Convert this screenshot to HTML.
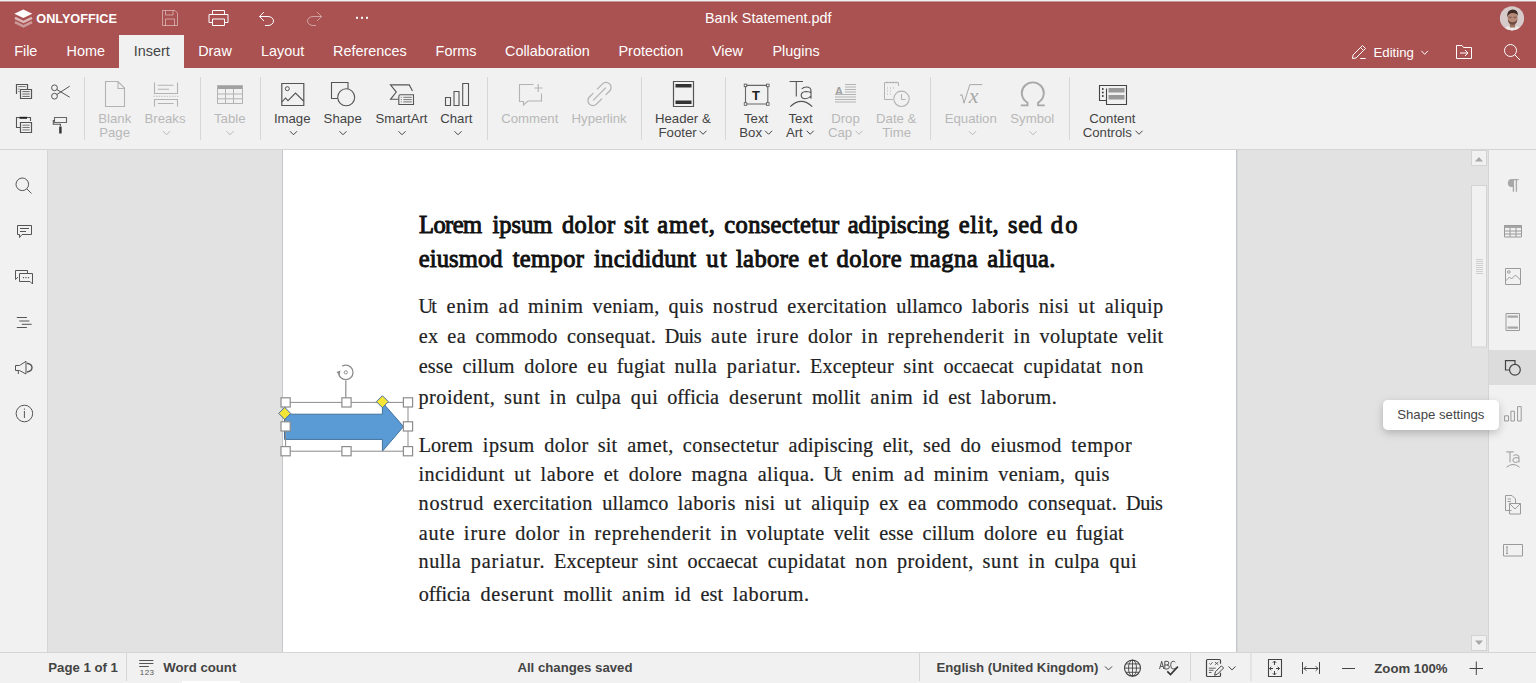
<!DOCTYPE html>
<html><head><meta charset="utf-8"><title>ONLYOFFICE</title>
<style>html,body{margin:0;padding:0;width:1536px;height:683px;overflow:hidden;background:#f1f1f1}svg{display:block}</style>
</head><body>
<svg width="1536" height="683" viewBox="0 0 1536 683">
<rect x="0" y="0" width="1536" height="683" fill="#f1f1f1" />
<rect x="0" y="0" width="1536" height="1" fill="#eef1f4" />
<rect x="0" y="1" width="1536" height="1" fill="#c99a9a" />
<rect x="0" y="2" width="1536" height="1" fill="#a64c4c" />
<rect x="0" y="3" width="1536" height="65" fill="#aa5252" />
<rect x="119" y="35" width="65" height="33" fill="#f1f1f1" />
<rect x="0" y="149" width="1536" height="1" fill="#d5d5d5" />
<rect x="47" y="150" width="1" height="502" fill="#d5d5d5" />
<rect x="48" y="150" width="1440" height="502" fill="#e2e2e2" />
<rect x="282" y="150" width="1" height="502" fill="#c3c7cc" />
<rect x="283" y="150" width="953" height="502" fill="#ffffff" />
<rect x="1236" y="150" width="1" height="502" fill="#c3c7cc" />
<rect x="1237" y="150" width="1" height="502" fill="#d6d7d9" />
<rect x="1488" y="150" width="1" height="502" fill="#d5d5d5" />
<rect x="1489" y="150" width="47" height="502" fill="#f1f1f1" />
<rect x="1489" y="350" width="47" height="35" fill="#dcdcdc" />
<rect x="0" y="652" width="1536" height="1" fill="#d5d5d5" />
<rect x="0" y="653" width="1536" height="30" fill="#f1f1f1" />
<g fill="#fff">
<path d="M14.3,13.8 L23.3,9.5 L32.3,13.8 L23.3,18.1 Z" stroke="none" stroke-width="1" fill="#ffffff" />
<path d="M15,17.8 L23.5,22 L32,17.8" stroke="rgba(255,255,255,0.6)" stroke-width="2.4" fill="none" />
<path d="M15,22.2 L23.5,26.4 L32,22.2" stroke="rgba(255,255,255,0.42)" stroke-width="2.4" fill="none" />
</g>
<text x="36.3" y="23" font-family="Liberation Sans" font-size="13.2" font-weight="bold" fill="#ffffff" textLength="80.6" lengthAdjust="spacingAndGlyphs">ONLYOFFICE</text>
<path d="M162.5,10.5 H175 L177.5,13 V25.5 H162.5 Z M165.5,10.5 V15 H173 V10.5 M165.5,25.5 V19 H174.5 V25.5" stroke="rgba(255,255,255,0.45)" stroke-width="1" fill="none" />
<path d="M212.5,14.5 V10.5 H224.5 V14.5 M212.5,22.5 H209 V14.5 H228 V22.5 H224.5 M212.5,19 H224.5 V25.5 H212.5 Z" stroke="#ffffff" stroke-width="1" fill="none" />
<path d="M264,12 L259.5,16.5 L264,21 M259.5,16.5 H268 A5.5,4.5 0 0 1 268,25.5 H265" stroke="#ffffff" stroke-width="1" fill="none" />
<path d="M317,12 L321.5,16.5 L317,21 M321.5,16.5 H313 A5.5,4.5 0 0 0 313,25.5 H316" stroke="rgba(255,255,255,0.45)" stroke-width="1" fill="none" />
<rect x="356" y="16.8" width="2" height="2" fill="#fff"/>
<rect x="361" y="16.8" width="2" height="2" fill="#fff"/>
<rect x="366" y="16.8" width="2" height="2" fill="#fff"/>
<text x="705" y="22.9" font-family="Liberation Sans" font-size="14.4" font-weight="normal" fill="#ffffff" >Bank Statement.pdf</text>
<clipPath id="av"><circle cx="1512" cy="18.3" r="12.1"/></clipPath>
<g clip-path="url(#av)">
<rect x="1499" y="5" width="26" height="27" fill="#d6caca"/>
<ellipse cx="1512.5" cy="31" rx="9" ry="5.5" fill="#eee8e6"/>
<rect x="1509.8" y="21" width="5.4" height="6.5" fill="#9c7263"/>
<ellipse cx="1512.6" cy="18.2" rx="4.9" ry="6.3" fill="#b58878"/>
<path d="M1507.8,19 Q1508.2,24.8 1512.6,24.8 Q1517,24.8 1517.4,19 Q1516.5,22 1512.6,22.2 Q1508.7,22 1507.8,19Z" fill="#6e4a3e"/>
<path d="M1507.2,17.5 Q1506.5,10 1512.5,9.6 Q1518.5,9.5 1518,16.5 Q1517.3,13 1512.8,13 Q1508.5,12.8 1507.2,17.5Z" fill="#3e2a22"/>
<path d="M1508.5,17.3 H1511.6 M1513.6,17.3 H1516.7" stroke="#5a4038" stroke-width="0.7"/>
</g>
<text x="14.2" y="56" font-family="Liberation Sans" font-size="14.4" font-weight="normal" fill="#ffffff" >File</text>
<text x="66.6" y="56" font-family="Liberation Sans" font-size="14.4" font-weight="normal" fill="#ffffff" >Home</text>
<text x="133.7" y="56" font-family="Liberation Sans" font-size="14.4" font-weight="normal" fill="#444444" >Insert</text>
<text x="198.2" y="56" font-family="Liberation Sans" font-size="14.4" font-weight="normal" fill="#ffffff" >Draw</text>
<text x="261.1" y="56" font-family="Liberation Sans" font-size="14.4" font-weight="normal" fill="#ffffff" >Layout</text>
<text x="333.1" y="56" font-family="Liberation Sans" font-size="14.4" font-weight="normal" fill="#ffffff" >References</text>
<text x="435.6" y="56" font-family="Liberation Sans" font-size="14.4" font-weight="normal" fill="#ffffff" >Forms</text>
<text x="505.0" y="56" font-family="Liberation Sans" font-size="14.4" font-weight="normal" fill="#ffffff" >Collaboration</text>
<text x="618.5" y="56" font-family="Liberation Sans" font-size="14.4" font-weight="normal" fill="#ffffff" >Protection</text>
<text x="711.9" y="56" font-family="Liberation Sans" font-size="14.4" font-weight="normal" fill="#ffffff" >View</text>
<text x="772.4" y="56" font-family="Liberation Sans" font-size="14.4" font-weight="normal" fill="#ffffff" >Plugins</text>
<path d="M1352.5,58.5 L1353,55 L1362.5,45.5 L1365.5,48.5 L1356,58 Z M1360.5,47.5 L1363.5,50.5 M1360.2,58.5 H1365.6" stroke="#ffffff" stroke-width="1" fill="none" />
<text x="1373.5" y="57.4" font-family="Liberation Sans" font-size="13.2" font-weight="normal" fill="#ffffff" >Editing</text>
<path d="M1421.45,50.85 L1424.7,54.35 L1427.95,50.85" stroke="#ffffff" stroke-width="1" fill="none" />
<path d="M1456.5,58.5 V45.5 H1462 L1463.5,47.5 H1471.5 V58.5 Z M1460,53 H1468 M1465,50 L1468,53 L1465,56" stroke="#ffffff" stroke-width="1" fill="none" />
<circle cx="1510.5" cy="50.5" r="6" fill="none" stroke="#ffffff" stroke-width="1"/>
<path d="M1514.8,54.8 L1520,60" stroke="#ffffff" stroke-width="1" fill="none" />
<rect x="84.0" y="77" width="1" height="63" fill="#d7d7d7" />
<rect x="200.0" y="77" width="1" height="63" fill="#d7d7d7" />
<rect x="260.0" y="77" width="1" height="63" fill="#d7d7d7" />
<rect x="487.0" y="77" width="1" height="63" fill="#d7d7d7" />
<rect x="641.0" y="77" width="1" height="63" fill="#d7d7d7" />
<rect x="725.0" y="77" width="1" height="63" fill="#d7d7d7" />
<rect x="930.0" y="77" width="1" height="63" fill="#d7d7d7" />
<rect x="1069.0" y="77" width="1" height="63" fill="#d7d7d7" />
<path d="M16.5,94 V84.5 H27.5 V89" stroke="#555" stroke-width="1.2" fill="none" />
<path d="M18.2,86.6 H25.7 M18.2,89 H19.5 M18.2,91.5 H19.5" stroke="#777" stroke-width="1" fill="none" />
<path d="M20.5,89.5 H31.5 V98.5 H20.5 Z" stroke="#555" stroke-width="1.2" fill="none" />
<path d="M22.3,91.6 H29.7 M22.3,94 H29.7 M22.3,96.4 H29.7" stroke="#666" stroke-width="1" fill="none" />
<circle cx="54.5" cy="87.8" r="2.9" fill="none" stroke="#555" stroke-width="1"/>
<circle cx="54.5" cy="96.2" r="2.9" fill="none" stroke="#555" stroke-width="1"/>
<path d="M56.8,89.5 L69.7,97.2 M56.8,94.5 L69.7,86.2" stroke="#555" stroke-width="1" fill="none" />
<path d="M20,127.5 H16.5 V117.5 H30.5 V121" stroke="#555" stroke-width="1.1" fill="none" />
<path d="M19.5,117.8 H27" stroke="#222" stroke-width="2" fill="none" />
<path d="M20.5,122.5 H31.5 V132.5 H20.5 Z" stroke="#555" stroke-width="1.2" fill="none" />
<path d="M22.4,125.2 H29.7 M22.4,127.5 H29.7 M22.4,129.9 H29.7" stroke="#777" stroke-width="1" fill="none" />
<path d="M54.5,117.5 H66.5 V122.5 H54.5 Z" stroke="#666" stroke-width="1.1" fill="none" />
<path d="M54.5,120.5 H53.3 V124.3 H60.4 V126" stroke="#555" stroke-width="1.1" fill="none" />
<path d="M60.4,126.5 V133.5" stroke="#333" stroke-width="2.4" fill="none" />
<path d="M105.5,81.5 H118 L124.5,88 V106.5 H105.5 Z M118,81.5 V88.5 H124.5" stroke="#b3b3b3" stroke-width="1.1" fill="none" />
<path d="M153.5,96.3 H179" stroke="#c4c4c4" stroke-width="1" fill="none" stroke-dasharray="1.6 1"/>
<path d="M154.5,82.5 V93.5 H177.5 V82.5 M157.8,85.3 H173.5 M157.8,89.3 H169 M154.5,106.5 V99.5 H177.5 V106.5 M157.8,103.5 H173.5" stroke="#b3b3b3" stroke-width="1.1" fill="none" />
<rect x="217.5" y="85" width="25" height="4" fill="#a0a0a0" />
<path d="M217.5,85.5 H242.5 V103.5 H217.5 Z M217.5,94 H242.5 M217.5,98.8 H242.5 M225.5,89 V103.5 M233.5,89 V103.5" stroke="#b3b3b3" stroke-width="1" fill="none" />
<path d="M281.8,83.5 H303.8 V105.5 H281.8 Z" stroke="#555" stroke-width="1.2" fill="none" />
<circle cx="287.3" cy="88.7" r="2" fill="none" stroke="#555" stroke-width="1"/>
<path d="M282,101.8 L285.5,98 L288,100.6 L295.5,93 L303.5,101" stroke="#555" stroke-width="1.1" fill="none" />
<path d="M348,89 V82.5 H331.5 V98.5 H337.8" stroke="#555" stroke-width="1.1" fill="none" />
<circle cx="346.2" cy="97.3" r="8.5" fill="none" stroke="#555" stroke-width="1.1"/>
<path d="M398.6,99.3 H390.5 L396.3,92.1 L390.5,84.9 H409.3 L412.5,91" stroke="#555" stroke-width="1.1" fill="none" />
<path d="M398.8,104.5 V96.5 Q398.8,94.8 400.5,94.8 H413.5 V104.5 Z" stroke="#555" stroke-width="1.1" fill="none" />
<path d="M400.8,97.3 H401.8 M400.8,99.6 H401.8 M400.8,101.9 H401.8 M403.3,97.3 H411.8 M403.3,99.6 H411.8 M403.3,101.9 H411.8" stroke="#777" stroke-width="1" fill="none" />
<path d="M445.5,97.5 H450.5 V105.5 H445.5 Z M454,91.5 H459 V105.5 H454 Z M462.7,83.5 H468.5 V105.5 H462.7 Z" stroke="#555" stroke-width="1.1" fill="none" />
<path d="M533.5,84.5 H519.5 V101.5 H523.5 V105 L528,101 H541.5 V93.5 M538.2,84 V92 M534.5,88 H542.5" stroke="#b3b3b3" stroke-width="1.1" fill="none" />
<g transform="translate(599.5,94) rotate(-45)" fill="none" stroke="#b3b3b3" stroke-width="1.3"><path d="M1.5,-5 H9.3 A5,5 0 0 1 9.3,5 H3.8"/><path d="M-1.5,5 H-9.3 A5,5 0 0 1 -9.3,-5 H-3.8"/><path d="M-9,0 H9"/></g>
<path d="M673.5,81.5 H693.5 V106.5 H673.5 Z" stroke="#555" stroke-width="1.2" fill="none" />
<rect x="675.5" y="84" width="16" height="3.5" fill="#333" />
<rect x="675.5" y="100.5" width="16" height="3.5" fill="#333" />
<path d="M745.5,85.4 H767.8 V104 H745.5 Z" stroke="#666" stroke-width="1.1" fill="none" />
<rect x="744.2" y="84.10000000000001" width="2.6" height="2.6" fill="#f1f1f1" stroke="#555" stroke-width="0.8"/>
<rect x="766.5" y="84.10000000000001" width="2.6" height="2.6" fill="#f1f1f1" stroke="#555" stroke-width="0.8"/>
<rect x="744.2" y="102.7" width="2.6" height="2.6" fill="#f1f1f1" stroke="#555" stroke-width="0.8"/>
<rect x="766.5" y="102.7" width="2.6" height="2.6" fill="#f1f1f1" stroke="#555" stroke-width="0.8"/>
<text x="751.9" y="99.7" font-family="Liberation Sans" font-size="13" font-weight="bold" fill="#222" >T</text>
<path d="M789.6,81.5 H803 M796.3,81.5 V96.5" stroke="#555" stroke-width="1.1" fill="none" />
<path d="M801.8,88.8 Q803.5,87 806.5,87 Q811,87 811,91 V98.8 M811,92.8 Q810,91.5 806,91.5 Q801.2,91.8 801.2,95.3 Q801.2,98.8 805.5,98.8 Q809,98.6 811,96" stroke="#555" stroke-width="1.1" fill="none" />
<path d="M790.2,106.6 Q801.2,96 812.3,106.6" stroke="#555" stroke-width="1.1" fill="none" />
<text x="835" y="94.5" font-family="Liberation Sans" font-size="11" font-weight="bold" fill="#a0a0a0" >A</text>
<path d="M845,84.5 H856 M845,87 H856 M845,89.5 H856 M845,92 H856 M835,94.5 H856 M835,97 H856 M835,99.5 H856 M835,102 H856" stroke="#b3b3b3" stroke-width="1" fill="none" />
<path d="M898.5,86 V82.5 H884.5 V99.5 H893" stroke="#b3b3b3" stroke-width="1" fill="none" />
<path d="M887,81.5 V83.5 M890,81.5 V83.5 M893,81.5 V83.5 M896,81.5 V83.5" stroke="#b3b3b3" stroke-width="1" fill="none" />
<path d="M887,88 H888 M890,88 H891 M893,88 H894 M887,91 H888 M890,91 H891 M887,94 H888 M890,94 H891" stroke="#b3b3b3" stroke-width="1" fill="none" />
<circle cx="901.5" cy="98.8" r="7.7" fill="#f1f1f1" stroke="#b3b3b3" stroke-width="1.1"/>
<path d="M901.5,94 V99.5 H905.5" stroke="#b3b3b3" stroke-width="1" fill="none" />
<path d="M960,95.5 L962,94.5 L964,103.2 L969.8,84.6 H982.3" stroke="#a8a8a8" stroke-width="1" fill="none" />
<text x="968.8" y="102.5" font-family="Liberation Serif" font-size="22" font-weight="normal" fill="#a8a8a8" font-style="italic">x</text>
<path d="M1020.8,105.4 H1027.5 V102.8 Q1021.8,99 1021.8,93 A11,10.6 0 1 1 1043.8,93 Q1043.8,99 1038.1,102.8 V105.4 H1044.8" stroke="#a8a8a8" stroke-width="1.9" fill="none" />
<path d="M1099.5,85.5 H1126.5 V104.5 H1106.5 V100.5 H1099.5 Z M1106.5,88.5 V100.5" stroke="#444" stroke-width="1.1" fill="none" />
<rect x="1108.5" y="88" width="16" height="4.5" fill="#999" />
<rect x="1108.5" y="95" width="16" height="4.5" fill="#999" />
<circle cx="1102.8" cy="89" r="0.9" fill="#333"/>
<circle cx="1102.8" cy="92.5" r="0.9" fill="#333"/>
<circle cx="1102.8" cy="96" r="0.9" fill="#333"/>
<text x="98.3" y="122.8" font-family="Liberation Sans" font-size="13.2" font-weight="normal" fill="#b8b8b8" >Blank</text>
<text x="99.2" y="136.8" font-family="Liberation Sans" font-size="13.2" font-weight="normal" fill="#b8b8b8" >Page</text>
<text x="144.5" y="122.8" font-family="Liberation Sans" font-size="13.2" font-weight="normal" fill="#b8b8b8" >Breaks</text>
<path d="M163.0,131.25 L166.5,134.75 L170.0,131.25" stroke="#b8b8b8" stroke-width="1" fill="none" />
<text x="214.0" y="122.8" font-family="Liberation Sans" font-size="13.2" font-weight="normal" fill="#b8b8b8" >Table</text>
<path d="M226.5,131.25 L230,134.75 L233.5,131.25" stroke="#b8b8b8" stroke-width="1" fill="none" />
<text x="273.9" y="122.8" font-family="Liberation Sans" font-size="13.2" font-weight="normal" fill="#444444" >Image</text>
<path d="M290.0,131.25 L293.5,134.75 L297.0,131.25" stroke="#444444" stroke-width="1" fill="none" />
<text x="323.59999999999997" y="122.8" font-family="Liberation Sans" font-size="13.2" font-weight="normal" fill="#444444" >Shape</text>
<path d="M339.5,131.25 L343,134.75 L346.5,131.25" stroke="#444444" stroke-width="1" fill="none" />
<text x="375.5" y="122.8" font-family="Liberation Sans" font-size="13.2" font-weight="normal" fill="#444444" >SmartArt</text>
<path d="M398.5,131.25 L402,134.75 L405.5,131.25" stroke="#444444" stroke-width="1" fill="none" />
<text x="440.2" y="122.8" font-family="Liberation Sans" font-size="13.2" font-weight="normal" fill="#444444" >Chart</text>
<path d="M454.5,131.25 L458,134.75 L461.5,131.25" stroke="#444444" stroke-width="1" fill="none" />
<text x="501.2" y="122.8" font-family="Liberation Sans" font-size="13.2" font-weight="normal" fill="#b8b8b8" >Comment</text>
<text x="571.6" y="122.8" font-family="Liberation Sans" font-size="13.2" font-weight="normal" fill="#b8b8b8" >Hyperlink</text>
<text x="655.0" y="122.8" font-family="Liberation Sans" font-size="13.2" font-weight="normal" fill="#444444" >Header &amp;</text>
<text x="658.5" y="136.8" font-family="Liberation Sans" font-size="13.2" font-weight="normal" fill="#444444" >Footer</text>
<path d="M699.5,130.75 L703,134.25 L706.5,130.75" stroke="#444444" stroke-width="1" fill="none" />
<text x="744.0" y="122.8" font-family="Liberation Sans" font-size="13.2" font-weight="normal" fill="#444444" >Text</text>
<text x="739.3000000000001" y="136.8" font-family="Liberation Sans" font-size="13.2" font-weight="normal" fill="#444444" >Box</text>
<path d="M765.1,130.75 L768.6,134.25 L772.1,130.75" stroke="#444444" stroke-width="1" fill="none" />
<text x="788.5" y="122.8" font-family="Liberation Sans" font-size="13.2" font-weight="normal" fill="#444444" >Text</text>
<text x="785.9000000000001" y="136.8" font-family="Liberation Sans" font-size="13.2" font-weight="normal" fill="#444444" >Art</text>
<path d="M806.7,130.75 L810.2,134.25 L813.7,130.75" stroke="#444444" stroke-width="1" fill="none" />
<text x="831.2" y="122.8" font-family="Liberation Sans" font-size="13.2" font-weight="normal" fill="#b8b8b8" >Drop</text>
<text x="828.0" y="136.8" font-family="Liberation Sans" font-size="13.2" font-weight="normal" fill="#b8b8b8" >Cap</text>
<path d="M855.5,130.75 L859,134.25 L862.5,130.75" stroke="#b8b8b8" stroke-width="1" fill="none" />
<text x="876.1" y="122.8" font-family="Liberation Sans" font-size="13.2" font-weight="normal" fill="#b8b8b8" >Date &amp;</text>
<text x="882.3000000000001" y="136.8" font-family="Liberation Sans" font-size="13.2" font-weight="normal" fill="#b8b8b8" >Time</text>
<text x="944.7" y="122.8" font-family="Liberation Sans" font-size="13.2" font-weight="normal" fill="#b8b8b8" >Equation</text>
<path d="M969.0,131.25 L972.5,134.75 L976.0,131.25" stroke="#b8b8b8" stroke-width="1" fill="none" />
<text x="1010.3000000000001" y="122.8" font-family="Liberation Sans" font-size="13.2" font-weight="normal" fill="#b8b8b8" >Symbol</text>
<path d="M1029.5,131.25 L1033,134.75 L1036.5,131.25" stroke="#b8b8b8" stroke-width="1" fill="none" />
<text x="1089.2" y="122.8" font-family="Liberation Sans" font-size="13.2" font-weight="normal" fill="#444444" >Content</text>
<text x="1082.7" y="136.8" font-family="Liberation Sans" font-size="13.2" font-weight="normal" fill="#444444" >Controls</text>
<path d="M1135.5,130.75 L1139,134.25 L1142.5,130.75" stroke="#444444" stroke-width="1" fill="none" />
<circle cx="22.3" cy="184.3" r="6.3" fill="none" stroke="#555" stroke-width="1"/>
<path d="M26.8,188.8 L31.5,193.5" stroke="#555" stroke-width="1" fill="none" />
<path d="M17.5,225.5 H31.5 V234.5 H22 L19.5,237.5 V234.5 H17.5 Z M20,228.5 H29 M20,231.5 H26" stroke="#555" stroke-width="1" fill="none" />
<path d="M15.5,279.5 V270.5 H27.5 V273 M15.5,279.5 L18,277" stroke="#555" stroke-width="1" fill="none" />
<path d="M19.5,273.5 H32.5 V284 L30,281.5 H19.5 Z" stroke="#555" stroke-width="1" fill="none" />
<rect x="22.9" y="277" width="1.2" height="1.2" fill="#555"/>
<rect x="25.4" y="277" width="1.2" height="1.2" fill="#555"/>
<rect x="27.9" y="277" width="1.2" height="1.2" fill="#555"/>
<path d="M16.8,317.5 H26.9 M19.3,321 H29.4 M21.8,324.3 H31.7 M16.8,327.5 H26.9" stroke="#555" stroke-width="1" fill="none" />
<path d="M15.5,365.5 H19.5 L26,361.3 V374 L19.5,370.5 H15.5 Z M18.3,370.5 V374" stroke="#555" stroke-width="1" fill="none" />
<path d="M27,363.2 Q32,364 32,367.6 Q32,371.3 27,372" stroke="#555" stroke-width="1.4" fill="none" />
<circle cx="24.4" cy="413.5" r="8.3" fill="none" stroke="#555" stroke-width="1"/>
<path d="M24.4,411 V418 M24.4,408.5 V409.8" stroke="#555" stroke-width="1" fill="none" />
<path d="M1513.4,179.3 H1510.8 Q1507.9,179.3 1507.9,183.1 Q1507.9,186.9 1510.8,186.9 H1513.4 Z" stroke="none" stroke-width="1" fill="#a8a8a8" />
<path d="M1510.5,179.6 H1518.6 M1513.4,179.3 V191.8 M1516.4,179.3 V191.8" stroke="#a8a8a8" stroke-width="1.3" fill="none" />
<rect x="1504.5" y="225" width="17" height="3" fill="#a6a6a6" />
<path d="M1504.5,225.5 H1521.5 V237 H1504.5 Z M1504.5,231 H1521.5 M1504.5,234 H1521.5 M1510,228 V237 M1516,228 V237" stroke="#9a9a9a" stroke-width="1" fill="none" />
<path d="M1505.5,268.5 H1520.5 V284.5 H1505.5 Z M1505.5,281 L1509.5,277 L1511.5,279 L1515.5,275 L1520.5,280" stroke="#9a9a9a" stroke-width="1" fill="none" />
<circle cx="1508.8" cy="272" r="1.3" fill="none" stroke="#9a9a9a" stroke-width="1"/>
<path d="M1506,313.5 H1519.5 V330.5 H1506 Z" stroke="#9a9a9a" stroke-width="1" fill="none" />
<rect x="1507.5" y="315.5" width="10.5" height="2.2" fill="#a6a6a6" />
<rect x="1507.5" y="326.5" width="10.5" height="2.2" fill="#a6a6a6" />
<path d="M1515,364.3 V360.6 H1505.5 V370 H1509.3" stroke="#444" stroke-width="1.2" fill="none" />
<circle cx="1514.9" cy="369.8" r="5.4" fill="none" stroke="#444" stroke-width="1.2"/>
<path d="M1504.6,415.8 H1508.5 V421 H1504.6 Z M1510.9,411.2 H1514.4 V421 H1510.9 Z M1517.6,406.6 H1521.2 V421 H1517.6 Z" stroke="#9a9a9a" stroke-width="1" fill="none" />
<path d="M1506.2,451.9 H1513.8 M1510,451.9 V462.3" stroke="#9a9a9a" stroke-width="1" fill="none" />
<path d="M1513.3,455.8 Q1514.5,454.8 1516.3,454.8 Q1519,454.8 1519,457.3 V462.4 M1519,458.2 Q1518,457.6 1515.8,457.7 Q1512.8,457.9 1512.8,460.1 Q1512.8,462.4 1515.5,462.4 Q1517.6,462.3 1519,460.7" stroke="#9a9a9a" stroke-width="1" fill="none" />
<path d="M1506.5,467.2 Q1513,461.8 1519.5,467.2" stroke="#9a9a9a" stroke-width="1" fill="none" />
<path d="M1511.5,510.5 H1505.5 V495.5 H1512 L1515.5,499 V503" stroke="#9a9a9a" stroke-width="1" fill="none" />
<path d="M1507.5,499 H1511 M1507.5,501.5 H1511" stroke="#9a9a9a" stroke-width="1" fill="none" />
<path d="M1509.5,503.5 H1520.5 V514 H1509.5 Z M1509.5,503.5 L1515,509 L1520.5,503.5" stroke="#9a9a9a" stroke-width="1" fill="none" />
<path d="M1503.5,544.5 H1522.5 V556 H1503.5 Z M1507,547 V553.5 M1506,547 H1508 M1506,553.5 H1508" stroke="#9a9a9a" stroke-width="1" fill="none" />
<rect x="1471.5" y="150.5" width="15" height="15" fill="#f1f1f1" stroke="#d3d3d3" stroke-width="1"/>
<path d="M1475,161.5 L1479,157 L1483,161.5 Z" stroke="none" stroke-width="1" fill="#a8a8a8" />
<rect x="1471.5" y="185.5" width="15" height="161.5" fill="#f1f1f1" stroke="#d3d3d3" stroke-width="1"/>
<rect x="1476" y="259" width="7" height="1" fill="#cfcfcf" />
<rect x="1476" y="261" width="7" height="1" fill="#cfcfcf" />
<rect x="1476" y="263" width="7" height="1" fill="#cfcfcf" />
<rect x="1476" y="265" width="7" height="1" fill="#cfcfcf" />
<rect x="1476" y="267" width="7" height="1" fill="#cfcfcf" />
<rect x="1476" y="269" width="7" height="1" fill="#cfcfcf" />
<rect x="1476" y="271" width="7" height="1" fill="#cfcfcf" />
<rect x="1476" y="273" width="7" height="1" fill="#cfcfcf" />
<rect x="1471.5" y="635.5" width="15" height="15" fill="#f1f1f1" stroke="#d3d3d3" stroke-width="1"/>
<path d="M1475,640.5 L1479,645 L1483,640.5 Z" stroke="none" stroke-width="1" fill="#a8a8a8" />
<defs><filter id="sh" x="-20%" y="-40%" width="140%" height="200%"><feDropShadow dx="0" dy="3" stdDeviation="4" flood-color="#000" flood-opacity="0.22"/></filter></defs>
<rect x="1383" y="400" width="116" height="30" rx="5" fill="#ffffff" filter="url(#sh)"/>
<text x="1397.2" y="418.6" font-family="Liberation Sans" font-size="13.2" font-weight="normal" fill="#444444" >Shape settings</text>
<text x="48.3" y="672.3" font-family="Liberation Sans" font-size="13.2" font-weight="bold" fill="#444444" >Page 1 of 1</text>
<rect x="126" y="653" width="1" height="28" fill="#d5d5d5" />
<path d="M139.2,660.5 H153.4 M139.2,663.5 H153.4 M139.2,666.5 H148.8" stroke="#555" stroke-width="1" fill="none" />
<text x="139.8" y="674.8" font-family="Liberation Sans" font-size="8" font-weight="normal" fill="#555" textLength="14.2" lengthAdjust="spacing">123</text>
<text x="163.3" y="672.3" font-family="Liberation Sans" font-size="13.2" font-weight="bold" fill="#444444" >Word count</text>
<text x="517.4" y="672.3" font-family="Liberation Sans" font-size="13.2" font-weight="bold" fill="#444444" >All changes saved</text>
<rect x="919" y="653" width="1" height="28" fill="#d5d5d5" />
<text x="936.5" y="671.9" font-family="Liberation Sans" font-size="13.2" font-weight="bold" fill="#444444" >English (United Kingdom)</text>
<path d="M1105.0,666.45 L1108.5,669.95 L1112.0,666.45" stroke="#444444" stroke-width="1" fill="none" />
<circle cx="1132.5" cy="668.1" r="8" fill="none" stroke="#444" stroke-width="1.1"/>
<ellipse cx="1132.5" cy="668.1" rx="4" ry="8" fill="none" stroke="#444" stroke-width="0.9"/>
<path d="M1124.5,668.1 H1140.5 M1126,663.9 H1139 M1126,672.3 H1139 M1132.5,660.1 V676.1" stroke="#444" stroke-width="0.9" fill="none" />
<path d="M1159.5,669 L1161.7,661.3 L1163.9,669 M1160.3,666.4 H1163.1 M1164.8,669 V661.3 H1167 Q1168.8,661.3 1168.8,663.1 Q1168.8,665 1167,665 H1164.8 M1167,665 Q1169.3,665 1169.3,667 Q1169.3,669 1167,669 H1164.8 M1175.3,662.4 Q1174.6,661.2 1173.1,661.2 Q1170.7,661.2 1170.7,665.1 Q1170.7,669 1173.1,669 Q1174.6,669 1175.3,667.8" stroke="#444" stroke-width="0.9" fill="none" />
<path d="M1167.3,671.4 L1170.5,674.6 L1177.9,666.6" stroke="#333" stroke-width="1.6" fill="none" />
<rect x="1190" y="653" width="1" height="28" fill="#d5d5d5" />
<path d="M1220.5,663.8 V660.5 Q1220.5,659.5 1219.5,659.5 H1207.5 Q1206.5,659.5 1206.5,660.5 V675.5 Q1206.5,676.5 1207.5,676.5 H1219.5 Q1220.5,676.5 1220.5,675.5 V672.8" stroke="#444" stroke-width="1.2" fill="none" />
<path d="M1209.4,663.4 L1210.6,664.5 L1212.6,662.2 M1214.9,662 L1218.3,664.8 M1218.3,662 L1214.9,664.8 M1208.9,668.2 H1215.7 M1208.9,670.3 H1213.5 M1208.9,672.5 H1211.5" stroke="#555" stroke-width="0.9" fill="none" />
<path d="M1214.6,675.3 L1215.4,671.8 L1221.4,665.8 L1223.6,668 L1217.6,674 Z" stroke="#444" stroke-width="1" fill="none" />
<path d="M1228.5,666.45 L1232,669.95 L1235.5,666.45" stroke="#444444" stroke-width="1" fill="none" />
<rect x="1250.5" y="653" width="1" height="28" fill="#d5d5d5" />
<path d="M1268.5,659.5 H1281.5 V676.5 H1268.5 Z" stroke="#444" stroke-width="1.1" fill="none" />
<path d="M1274.5,661 V665 M1272.8,662.8 L1274.5,661 L1276.2,662.8 M1274.5,675 V671 M1272.8,673.2 L1274.5,675 L1276.2,673.2 M1269.5,668.5 H1273 M1279.5,668.5 H1276 M1271.3,666.8 L1269.5,668.5 L1271.3,670.2 M1277.7,666.8 L1279.5,668.5 L1277.7,670.2" stroke="#444" stroke-width="1" fill="none" />
<path d="M1302.5,662 V674 M1319.5,662 V674 M1304,668.5 H1318 M1306.3,666.2 L1304,668.5 L1306.3,670.8 M1315.7,666.2 L1318,668.5 L1315.7,670.8" stroke="#444" stroke-width="1" fill="none" />
<path d="M1342,668.5 H1355" stroke="#444" stroke-width="1" fill="none" />
<text x="1374.3" y="672.6" font-family="Liberation Sans" font-size="13.2" font-weight="bold" fill="#444444" >Zoom 100%</text>
<path d="M1469.5,668.5 H1483 M1476.3,661.5 V675" stroke="#444" stroke-width="1" fill="none" />
<rect x="182" y="681" width="58" height="2" fill="#ffffff" />
<text x="418.99" y="232.9" font-family="Liberation Serif" font-size="24.5" font-weight="normal" fill="#111111" stroke="#111111" stroke-width="0.95" textLength="63.09" lengthAdjust="spacing">Lorem</text>
<text x="492.39" y="232.9" font-family="Liberation Serif" font-size="24.5" font-weight="normal" fill="#111111" stroke="#111111" stroke-width="0.95" textLength="60.00" lengthAdjust="spacing">ipsum</text>
<text x="561.91" y="232.9" font-family="Liberation Serif" font-size="24.5" font-weight="normal" fill="#111111" stroke="#111111" stroke-width="0.95" textLength="53.20" lengthAdjust="spacing">dolor</text>
<text x="624.00" y="232.9" font-family="Liberation Serif" font-size="24.5" font-weight="normal" fill="#111111" stroke="#111111" stroke-width="0.95" textLength="24.35" lengthAdjust="spacing">sit</text>
<text x="657.24" y="232.9" font-family="Liberation Serif" font-size="24.5" font-weight="normal" fill="#111111" stroke="#111111" stroke-width="0.95" textLength="57.60" lengthAdjust="spacing">amet,</text>
<text x="724.37" y="232.9" font-family="Liberation Serif" font-size="24.5" font-weight="normal" fill="#111111" stroke="#111111" stroke-width="0.95" textLength="114.75" lengthAdjust="spacing">consectetur</text>
<text x="847.64" y="232.9" font-family="Liberation Serif" font-size="24.5" font-weight="normal" fill="#111111" stroke="#111111" stroke-width="0.95" textLength="101.58" lengthAdjust="spacing">adipiscing</text>
<text x="958.74" y="232.9" font-family="Liberation Serif" font-size="24.5" font-weight="normal" fill="#111111" stroke="#111111" stroke-width="0.95" textLength="40.00" lengthAdjust="spacing">elit,</text>
<text x="1007.90" y="232.9" font-family="Liberation Serif" font-size="24.5" font-weight="normal" fill="#111111" stroke="#111111" stroke-width="0.95" textLength="34.10" lengthAdjust="spacing">sed</text>
<text x="1050.71" y="232.9" font-family="Liberation Serif" font-size="24.5" font-weight="normal" fill="#111111" stroke="#111111" stroke-width="0.95" textLength="26.82" lengthAdjust="spacing">do</text>
<text x="418.74" y="267" font-family="Liberation Serif" font-size="24.5" font-weight="normal" fill="#111111" stroke="#111111" stroke-width="0.95" textLength="83.86" lengthAdjust="spacing">eiusmod</text>
<text x="512.66" y="267" font-family="Liberation Serif" font-size="24.5" font-weight="normal" fill="#111111" stroke="#111111" stroke-width="0.95" textLength="71.30" lengthAdjust="spacing">tempor</text>
<text x="593.99" y="267" font-family="Liberation Serif" font-size="24.5" font-weight="normal" fill="#111111" stroke="#111111" stroke-width="0.95" textLength="102.16" lengthAdjust="spacing">incididunt</text>
<text x="706.18" y="267" font-family="Liberation Serif" font-size="24.5" font-weight="normal" fill="#111111" stroke="#111111" stroke-width="0.95" textLength="20.67" lengthAdjust="spacing">ut</text>
<text x="735.91" y="267" font-family="Liberation Serif" font-size="24.5" font-weight="normal" fill="#111111" stroke="#111111" stroke-width="0.95" textLength="63.24" lengthAdjust="spacing">labore</text>
<text x="808.34" y="267" font-family="Liberation Serif" font-size="24.5" font-weight="normal" fill="#111111" stroke="#111111" stroke-width="0.95" textLength="19.30" lengthAdjust="spacing">et</text>
<text x="836.51" y="267" font-family="Liberation Serif" font-size="24.5" font-weight="normal" fill="#111111" stroke="#111111" stroke-width="0.95" textLength="65.13" lengthAdjust="spacing">dolore</text>
<text x="910.29" y="267" font-family="Liberation Serif" font-size="24.5" font-weight="normal" fill="#111111" stroke="#111111" stroke-width="0.95" textLength="67.25" lengthAdjust="spacing">magna</text>
<text x="987.14" y="267" font-family="Liberation Serif" font-size="24.5" font-weight="normal" fill="#111111" stroke="#111111" stroke-width="0.95" textLength="68.28" lengthAdjust="spacing">aliqua.</text>
<text x="418.39" y="313.2" font-family="Liberation Serif" font-size="20.2" font-weight="normal" fill="#222222" stroke="#222222" stroke-width="0.2" textLength="18.43" lengthAdjust="spacing">Ut</text>
<text x="446.62" y="313.2" font-family="Liberation Serif" font-size="20.2" font-weight="normal" fill="#222222" stroke="#222222" stroke-width="0.2" textLength="42.09" lengthAdjust="spacing">enim</text>
<text x="498.39" y="313.2" font-family="Liberation Serif" font-size="20.2" font-weight="normal" fill="#222222" stroke="#222222" stroke-width="0.2" textLength="20.20" lengthAdjust="spacing">ad</text>
<text x="528.07" y="313.2" font-family="Liberation Serif" font-size="20.2" font-weight="normal" fill="#222222" stroke="#222222" stroke-width="0.2" textLength="54.85" lengthAdjust="spacing">minim</text>
<text x="592.52" y="313.2" font-family="Liberation Serif" font-size="20.2" font-weight="normal" fill="#222222" stroke="#222222" stroke-width="0.2" textLength="66.80" lengthAdjust="spacing">veniam,</text>
<text x="668.61" y="313.2" font-family="Liberation Serif" font-size="20.2" font-weight="normal" fill="#222222" stroke="#222222" stroke-width="0.2" textLength="34.79" lengthAdjust="spacing">quis</text>
<text x="712.81" y="313.2" font-family="Liberation Serif" font-size="20.2" font-weight="normal" fill="#222222" stroke="#222222" stroke-width="0.2" textLength="64.89" lengthAdjust="spacing">nostrud</text>
<text x="787.28" y="313.2" font-family="Liberation Serif" font-size="20.2" font-weight="normal" fill="#222222" stroke="#222222" stroke-width="0.2" textLength="99.24" lengthAdjust="spacing">exercitation</text>
<text x="896.20" y="313.2" font-family="Liberation Serif" font-size="20.2" font-weight="normal" fill="#222222" stroke="#222222" stroke-width="0.2" textLength="66.17" lengthAdjust="spacing">ullamco</text>
<text x="971.73" y="313.2" font-family="Liberation Serif" font-size="20.2" font-weight="normal" fill="#222222" stroke="#222222" stroke-width="0.2" textLength="57.50" lengthAdjust="spacing">laboris</text>
<text x="1038.64" y="313.2" font-family="Liberation Serif" font-size="20.2" font-weight="normal" fill="#222222" stroke="#222222" stroke-width="0.2" textLength="30.26" lengthAdjust="spacing">nisi</text>
<text x="1078.23" y="313.2" font-family="Liberation Serif" font-size="20.2" font-weight="normal" fill="#222222" stroke="#222222" stroke-width="0.2" textLength="16.71" lengthAdjust="spacing">ut</text>
<text x="1104.74" y="313.2" font-family="Liberation Serif" font-size="20.2" font-weight="normal" fill="#222222" stroke="#222222" stroke-width="0.2" textLength="58.25" lengthAdjust="spacing">aliquip</text>
<text x="418.72" y="342.7" font-family="Liberation Serif" font-size="20.2" font-weight="normal" fill="#222222" stroke="#222222" stroke-width="0.2" textLength="19.31" lengthAdjust="spacing">ex</text>
<text x="447.28" y="342.7" font-family="Liberation Serif" font-size="20.2" font-weight="normal" fill="#222222" stroke="#222222" stroke-width="0.2" textLength="18.42" lengthAdjust="spacing">ea</text>
<text x="475.61" y="342.7" font-family="Liberation Serif" font-size="20.2" font-weight="normal" fill="#222222" stroke="#222222" stroke-width="0.2" textLength="81.64" lengthAdjust="spacing">commodo</text>
<text x="566.89" y="342.7" font-family="Liberation Serif" font-size="20.2" font-weight="normal" fill="#222222" stroke="#222222" stroke-width="0.2" textLength="88.80" lengthAdjust="spacing">consequat.</text>
<text x="664.76" y="342.7" font-family="Liberation Serif" font-size="20.2" font-weight="normal" fill="#222222" stroke="#222222" stroke-width="0.2" textLength="36.90" lengthAdjust="spacing">Duis</text>
<text x="711.11" y="342.7" font-family="Liberation Serif" font-size="20.2" font-weight="normal" fill="#222222" stroke="#222222" stroke-width="0.2" textLength="35.85" lengthAdjust="spacing">aute</text>
<text x="756.36" y="342.7" font-family="Liberation Serif" font-size="20.2" font-weight="normal" fill="#222222" stroke="#222222" stroke-width="0.2" textLength="42.05" lengthAdjust="spacing">irure</text>
<text x="808.07" y="342.7" font-family="Liberation Serif" font-size="20.2" font-weight="normal" fill="#222222" stroke="#222222" stroke-width="0.2" textLength="43.92" lengthAdjust="spacing">dolor</text>
<text x="861.30" y="342.7" font-family="Liberation Serif" font-size="20.2" font-weight="normal" fill="#222222" stroke="#222222" stroke-width="0.2" textLength="16.59" lengthAdjust="spacing">in</text>
<text x="887.49" y="342.7" font-family="Liberation Serif" font-size="20.2" font-weight="normal" fill="#222222" stroke="#222222" stroke-width="0.2" textLength="116.37" lengthAdjust="spacing">reprehenderit</text>
<text x="1013.38" y="342.7" font-family="Liberation Serif" font-size="20.2" font-weight="normal" fill="#222222" stroke="#222222" stroke-width="0.2" textLength="16.59" lengthAdjust="spacing">in</text>
<text x="1039.47" y="342.7" font-family="Liberation Serif" font-size="20.2" font-weight="normal" fill="#222222" stroke="#222222" stroke-width="0.2" textLength="78.13" lengthAdjust="spacing">voluptate</text>
<text x="1127.10" y="342.7" font-family="Liberation Serif" font-size="20.2" font-weight="normal" fill="#222222" stroke="#222222" stroke-width="0.2" textLength="36.02" lengthAdjust="spacing">velit</text>
<text x="418.72" y="372.5" font-family="Liberation Serif" font-size="20.2" font-weight="normal" fill="#222222" stroke="#222222" stroke-width="0.2" textLength="33.88" lengthAdjust="spacing">esse</text>
<text x="462.45" y="372.5" font-family="Liberation Serif" font-size="20.2" font-weight="normal" fill="#222222" stroke="#222222" stroke-width="0.2" textLength="51.90" lengthAdjust="spacing">cillum</text>
<text x="524.25" y="372.5" font-family="Liberation Serif" font-size="20.2" font-weight="normal" fill="#222222" stroke="#222222" stroke-width="0.2" textLength="53.12" lengthAdjust="spacing">dolore</text>
<text x="587.20" y="372.5" font-family="Liberation Serif" font-size="20.2" font-weight="normal" fill="#222222" stroke="#222222" stroke-width="0.2" textLength="20.08" lengthAdjust="spacing">eu</text>
<text x="616.69" y="372.5" font-family="Liberation Serif" font-size="20.2" font-weight="normal" fill="#222222" stroke="#222222" stroke-width="0.2" textLength="48.05" lengthAdjust="spacing">fugiat</text>
<text x="674.55" y="372.5" font-family="Liberation Serif" font-size="20.2" font-weight="normal" fill="#222222" stroke="#222222" stroke-width="0.2" textLength="42.24" lengthAdjust="spacing">nulla</text>
<text x="726.66" y="372.5" font-family="Liberation Serif" font-size="20.2" font-weight="normal" fill="#222222" stroke="#222222" stroke-width="0.2" textLength="73.90" lengthAdjust="spacing">pariatur.</text>
<text x="809.89" y="372.5" font-family="Liberation Serif" font-size="20.2" font-weight="normal" fill="#222222" stroke="#222222" stroke-width="0.2" textLength="83.73" lengthAdjust="spacing">Excepteur</text>
<text x="903.15" y="372.5" font-family="Liberation Serif" font-size="20.2" font-weight="normal" fill="#222222" stroke="#222222" stroke-width="0.2" textLength="30.44" lengthAdjust="spacing">sint</text>
<text x="943.57" y="372.5" font-family="Liberation Serif" font-size="20.2" font-weight="normal" fill="#222222" stroke="#222222" stroke-width="0.2" textLength="70.08" lengthAdjust="spacing">occaecat</text>
<text x="1023.61" y="372.5" font-family="Liberation Serif" font-size="20.2" font-weight="normal" fill="#222222" stroke="#222222" stroke-width="0.2" textLength="77.70" lengthAdjust="spacing">cupidatat</text>
<text x="1111.12" y="372.5" font-family="Liberation Serif" font-size="20.2" font-weight="normal" fill="#222222" stroke="#222222" stroke-width="0.2" textLength="32.19" lengthAdjust="spacing">non</text>
<text x="418.45" y="403.5" font-family="Liberation Serif" font-size="20.2" font-weight="normal" fill="#222222" stroke="#222222" stroke-width="0.2" textLength="76.36" lengthAdjust="spacing">proident,</text>
<text x="503.90" y="403.5" font-family="Liberation Serif" font-size="20.2" font-weight="normal" fill="#222222" stroke="#222222" stroke-width="0.2" textLength="35.91" lengthAdjust="spacing">sunt</text>
<text x="549.51" y="403.5" font-family="Liberation Serif" font-size="20.2" font-weight="normal" fill="#222222" stroke="#222222" stroke-width="0.2" textLength="16.59" lengthAdjust="spacing">in</text>
<text x="575.91" y="403.5" font-family="Liberation Serif" font-size="20.2" font-weight="normal" fill="#222222" stroke="#222222" stroke-width="0.2" textLength="44.70" lengthAdjust="spacing">culpa</text>
<text x="630.74" y="403.5" font-family="Liberation Serif" font-size="20.2" font-weight="normal" fill="#222222" stroke="#222222" stroke-width="0.2" textLength="27.16" lengthAdjust="spacing">qui</text>
<text x="667.37" y="403.5" font-family="Liberation Serif" font-size="20.2" font-weight="normal" fill="#222222" stroke="#222222" stroke-width="0.2" textLength="51.57" lengthAdjust="spacing">officia</text>
<text x="729.07" y="403.5" font-family="Liberation Serif" font-size="20.2" font-weight="normal" fill="#222222" stroke="#222222" stroke-width="0.2" textLength="73.02" lengthAdjust="spacing">deserunt</text>
<text x="811.88" y="403.5" font-family="Liberation Serif" font-size="20.2" font-weight="normal" fill="#222222" stroke="#222222" stroke-width="0.2" textLength="48.48" lengthAdjust="spacing">mollit</text>
<text x="870.24" y="403.5" font-family="Liberation Serif" font-size="20.2" font-weight="normal" fill="#222222" stroke="#222222" stroke-width="0.2" textLength="42.58" lengthAdjust="spacing">anim</text>
<text x="922.41" y="403.5" font-family="Liberation Serif" font-size="20.2" font-weight="normal" fill="#222222" stroke="#222222" stroke-width="0.2" textLength="16.16" lengthAdjust="spacing">id</text>
<text x="948.25" y="403.5" font-family="Liberation Serif" font-size="20.2" font-weight="normal" fill="#222222" stroke="#222222" stroke-width="0.2" textLength="22.77" lengthAdjust="spacing">est</text>
<text x="980.56" y="403.5" font-family="Liberation Serif" font-size="20.2" font-weight="normal" fill="#222222" stroke="#222222" stroke-width="0.2" textLength="76.17" lengthAdjust="spacing">laborum.</text>
<text x="418.63" y="451.8" font-family="Liberation Serif" font-size="20.2" font-weight="normal" fill="#222222" stroke="#222222" stroke-width="0.2" textLength="54.42" lengthAdjust="spacing">Lorem</text>
<text x="482.87" y="451.8" font-family="Liberation Serif" font-size="20.2" font-weight="normal" fill="#222222" stroke="#222222" stroke-width="0.2" textLength="51.30" lengthAdjust="spacing">ipsum</text>
<text x="544.23" y="451.8" font-family="Liberation Serif" font-size="20.2" font-weight="normal" fill="#222222" stroke="#222222" stroke-width="0.2" textLength="43.92" lengthAdjust="spacing">dolor</text>
<text x="597.85" y="451.8" font-family="Liberation Serif" font-size="20.2" font-weight="normal" fill="#222222" stroke="#222222" stroke-width="0.2" textLength="19.25" lengthAdjust="spacing">sit</text>
<text x="627.21" y="451.8" font-family="Liberation Serif" font-size="20.2" font-weight="normal" fill="#222222" stroke="#222222" stroke-width="0.2" textLength="46.03" lengthAdjust="spacing">amet,</text>
<text x="682.80" y="451.8" font-family="Liberation Serif" font-size="20.2" font-weight="normal" fill="#222222" stroke="#222222" stroke-width="0.2" textLength="95.80" lengthAdjust="spacing">consectetur</text>
<text x="788.51" y="451.8" font-family="Liberation Serif" font-size="20.2" font-weight="normal" fill="#222222" stroke="#222222" stroke-width="0.2" textLength="84.64" lengthAdjust="spacing">adipiscing</text>
<text x="882.80" y="451.8" font-family="Liberation Serif" font-size="20.2" font-weight="normal" fill="#222222" stroke="#222222" stroke-width="0.2" textLength="30.79" lengthAdjust="spacing">elit,</text>
<text x="922.92" y="451.8" font-family="Liberation Serif" font-size="20.2" font-weight="normal" fill="#222222" stroke="#222222" stroke-width="0.2" textLength="27.74" lengthAdjust="spacing">sed</text>
<text x="960.62" y="451.8" font-family="Liberation Serif" font-size="20.2" font-weight="normal" fill="#222222" stroke="#222222" stroke-width="0.2" textLength="20.25" lengthAdjust="spacing">do</text>
<text x="990.90" y="451.8" font-family="Liberation Serif" font-size="20.2" font-weight="normal" fill="#222222" stroke="#222222" stroke-width="0.2" textLength="70.51" lengthAdjust="spacing">eiusmod</text>
<text x="1071.27" y="451.8" font-family="Liberation Serif" font-size="20.2" font-weight="normal" fill="#222222" stroke="#222222" stroke-width="0.2" textLength="60.41" lengthAdjust="spacing">tempor</text>
<text x="418.52" y="481.4" font-family="Liberation Serif" font-size="20.2" font-weight="normal" fill="#222222" stroke="#222222" stroke-width="0.2" textLength="85.75" lengthAdjust="spacing">incididunt</text>
<text x="514.23" y="481.4" font-family="Liberation Serif" font-size="20.2" font-weight="normal" fill="#222222" stroke="#222222" stroke-width="0.2" textLength="16.71" lengthAdjust="spacing">ut</text>
<text x="540.58" y="481.4" font-family="Liberation Serif" font-size="20.2" font-weight="normal" fill="#222222" stroke="#222222" stroke-width="0.2" textLength="53.28" lengthAdjust="spacing">labore</text>
<text x="603.73" y="481.4" font-family="Liberation Serif" font-size="20.2" font-weight="normal" fill="#222222" stroke="#222222" stroke-width="0.2" textLength="14.94" lengthAdjust="spacing">et</text>
<text x="628.72" y="481.4" font-family="Liberation Serif" font-size="20.2" font-weight="normal" fill="#222222" stroke="#222222" stroke-width="0.2" textLength="53.12" lengthAdjust="spacing">dolore</text>
<text x="691.61" y="481.4" font-family="Liberation Serif" font-size="20.2" font-weight="normal" fill="#222222" stroke="#222222" stroke-width="0.2" textLength="55.93" lengthAdjust="spacing">magna</text>
<text x="757.70" y="481.4" font-family="Liberation Serif" font-size="20.2" font-weight="normal" fill="#222222" stroke="#222222" stroke-width="0.2" textLength="56.57" lengthAdjust="spacing">aliqua.</text>
<text x="823.40" y="481.4" font-family="Liberation Serif" font-size="20.2" font-weight="normal" fill="#222222" stroke="#222222" stroke-width="0.2" textLength="18.43" lengthAdjust="spacing">Ut</text>
<text x="851.82" y="481.4" font-family="Liberation Serif" font-size="20.2" font-weight="normal" fill="#222222" stroke="#222222" stroke-width="0.2" textLength="42.09" lengthAdjust="spacing">enim</text>
<text x="903.77" y="481.4" font-family="Liberation Serif" font-size="20.2" font-weight="normal" fill="#222222" stroke="#222222" stroke-width="0.2" textLength="20.20" lengthAdjust="spacing">ad</text>
<text x="933.64" y="481.4" font-family="Liberation Serif" font-size="20.2" font-weight="normal" fill="#222222" stroke="#222222" stroke-width="0.2" textLength="54.85" lengthAdjust="spacing">minim</text>
<text x="998.27" y="481.4" font-family="Liberation Serif" font-size="20.2" font-weight="normal" fill="#222222" stroke="#222222" stroke-width="0.2" textLength="66.80" lengthAdjust="spacing">veniam,</text>
<text x="1074.54" y="481.4" font-family="Liberation Serif" font-size="20.2" font-weight="normal" fill="#222222" stroke="#222222" stroke-width="0.2" textLength="34.79" lengthAdjust="spacing">quis</text>
<text x="418.57" y="510.4" font-family="Liberation Serif" font-size="20.2" font-weight="normal" fill="#222222" stroke="#222222" stroke-width="0.2" textLength="64.89" lengthAdjust="spacing">nostrud</text>
<text x="493.15" y="510.4" font-family="Liberation Serif" font-size="20.2" font-weight="normal" fill="#222222" stroke="#222222" stroke-width="0.2" textLength="99.24" lengthAdjust="spacing">exercitation</text>
<text x="602.17" y="510.4" font-family="Liberation Serif" font-size="20.2" font-weight="normal" fill="#222222" stroke="#222222" stroke-width="0.2" textLength="66.17" lengthAdjust="spacing">ullamco</text>
<text x="677.81" y="510.4" font-family="Liberation Serif" font-size="20.2" font-weight="normal" fill="#222222" stroke="#222222" stroke-width="0.2" textLength="57.50" lengthAdjust="spacing">laboris</text>
<text x="744.83" y="510.4" font-family="Liberation Serif" font-size="20.2" font-weight="normal" fill="#222222" stroke="#222222" stroke-width="0.2" textLength="30.26" lengthAdjust="spacing">nisi</text>
<text x="784.52" y="510.4" font-family="Liberation Serif" font-size="20.2" font-weight="normal" fill="#222222" stroke="#222222" stroke-width="0.2" textLength="16.71" lengthAdjust="spacing">ut</text>
<text x="811.13" y="510.4" font-family="Liberation Serif" font-size="20.2" font-weight="normal" fill="#222222" stroke="#222222" stroke-width="0.2" textLength="58.25" lengthAdjust="spacing">aliquip</text>
<text x="879.17" y="510.4" font-family="Liberation Serif" font-size="20.2" font-weight="normal" fill="#222222" stroke="#222222" stroke-width="0.2" textLength="19.31" lengthAdjust="spacing">ex</text>
<text x="907.94" y="510.4" font-family="Liberation Serif" font-size="20.2" font-weight="normal" fill="#222222" stroke="#222222" stroke-width="0.2" textLength="18.42" lengthAdjust="spacing">ea</text>
<text x="936.48" y="510.4" font-family="Liberation Serif" font-size="20.2" font-weight="normal" fill="#222222" stroke="#222222" stroke-width="0.2" textLength="81.64" lengthAdjust="spacing">commodo</text>
<text x="1027.95" y="510.4" font-family="Liberation Serif" font-size="20.2" font-weight="normal" fill="#222222" stroke="#222222" stroke-width="0.2" textLength="88.80" lengthAdjust="spacing">consequat.</text>
<text x="1126.03" y="510.4" font-family="Liberation Serif" font-size="20.2" font-weight="normal" fill="#222222" stroke="#222222" stroke-width="0.2" textLength="36.90" lengthAdjust="spacing">Duis</text>
<text x="418.71" y="539.6" font-family="Liberation Serif" font-size="20.2" font-weight="normal" fill="#222222" stroke="#222222" stroke-width="0.2" textLength="35.85" lengthAdjust="spacing">aute</text>
<text x="463.81" y="539.6" font-family="Liberation Serif" font-size="20.2" font-weight="normal" fill="#222222" stroke="#222222" stroke-width="0.2" textLength="42.05" lengthAdjust="spacing">irure</text>
<text x="515.37" y="539.6" font-family="Liberation Serif" font-size="20.2" font-weight="normal" fill="#222222" stroke="#222222" stroke-width="0.2" textLength="43.92" lengthAdjust="spacing">dolor</text>
<text x="568.46" y="539.6" font-family="Liberation Serif" font-size="20.2" font-weight="normal" fill="#222222" stroke="#222222" stroke-width="0.2" textLength="16.59" lengthAdjust="spacing">in</text>
<text x="594.51" y="539.6" font-family="Liberation Serif" font-size="20.2" font-weight="normal" fill="#222222" stroke="#222222" stroke-width="0.2" textLength="116.37" lengthAdjust="spacing">reprehenderit</text>
<text x="720.24" y="539.6" font-family="Liberation Serif" font-size="20.2" font-weight="normal" fill="#222222" stroke="#222222" stroke-width="0.2" textLength="16.59" lengthAdjust="spacing">in</text>
<text x="746.20" y="539.6" font-family="Liberation Serif" font-size="20.2" font-weight="normal" fill="#222222" stroke="#222222" stroke-width="0.2" textLength="78.13" lengthAdjust="spacing">voluptate</text>
<text x="833.68" y="539.6" font-family="Liberation Serif" font-size="20.2" font-weight="normal" fill="#222222" stroke="#222222" stroke-width="0.2" textLength="36.02" lengthAdjust="spacing">velit</text>
<text x="879.25" y="539.6" font-family="Liberation Serif" font-size="20.2" font-weight="normal" fill="#222222" stroke="#222222" stroke-width="0.2" textLength="33.88" lengthAdjust="spacing">esse</text>
<text x="922.60" y="539.6" font-family="Liberation Serif" font-size="20.2" font-weight="normal" fill="#222222" stroke="#222222" stroke-width="0.2" textLength="51.90" lengthAdjust="spacing">cillum</text>
<text x="984.01" y="539.6" font-family="Liberation Serif" font-size="20.2" font-weight="normal" fill="#222222" stroke="#222222" stroke-width="0.2" textLength="53.12" lengthAdjust="spacing">dolore</text>
<text x="1046.57" y="539.6" font-family="Liberation Serif" font-size="20.2" font-weight="normal" fill="#222222" stroke="#222222" stroke-width="0.2" textLength="20.08" lengthAdjust="spacing">eu</text>
<text x="1075.67" y="539.6" font-family="Liberation Serif" font-size="20.2" font-weight="normal" fill="#222222" stroke="#222222" stroke-width="0.2" textLength="48.05" lengthAdjust="spacing">fugiat</text>
<text x="418.57" y="568.4" font-family="Liberation Serif" font-size="20.2" font-weight="normal" fill="#222222" stroke="#222222" stroke-width="0.2" textLength="42.24" lengthAdjust="spacing">nulla</text>
<text x="470.69" y="568.4" font-family="Liberation Serif" font-size="20.2" font-weight="normal" fill="#222222" stroke="#222222" stroke-width="0.2" textLength="73.90" lengthAdjust="spacing">pariatur.</text>
<text x="553.93" y="568.4" font-family="Liberation Serif" font-size="20.2" font-weight="normal" fill="#222222" stroke="#222222" stroke-width="0.2" textLength="83.73" lengthAdjust="spacing">Excepteur</text>
<text x="647.20" y="568.4" font-family="Liberation Serif" font-size="20.2" font-weight="normal" fill="#222222" stroke="#222222" stroke-width="0.2" textLength="30.44" lengthAdjust="spacing">sint</text>
<text x="687.62" y="568.4" font-family="Liberation Serif" font-size="20.2" font-weight="normal" fill="#222222" stroke="#222222" stroke-width="0.2" textLength="70.08" lengthAdjust="spacing">occaecat</text>
<text x="767.68" y="568.4" font-family="Liberation Serif" font-size="20.2" font-weight="normal" fill="#222222" stroke="#222222" stroke-width="0.2" textLength="77.70" lengthAdjust="spacing">cupidatat</text>
<text x="855.19" y="568.4" font-family="Liberation Serif" font-size="20.2" font-weight="normal" fill="#222222" stroke="#222222" stroke-width="0.2" textLength="32.19" lengthAdjust="spacing">non</text>
<text x="896.97" y="568.4" font-family="Liberation Serif" font-size="20.2" font-weight="normal" fill="#222222" stroke="#222222" stroke-width="0.2" textLength="76.36" lengthAdjust="spacing">proident,</text>
<text x="982.49" y="568.4" font-family="Liberation Serif" font-size="20.2" font-weight="normal" fill="#222222" stroke="#222222" stroke-width="0.2" textLength="35.91" lengthAdjust="spacing">sunt</text>
<text x="1028.16" y="568.4" font-family="Liberation Serif" font-size="20.2" font-weight="normal" fill="#222222" stroke="#222222" stroke-width="0.2" textLength="16.59" lengthAdjust="spacing">in</text>
<text x="1054.62" y="568.4" font-family="Liberation Serif" font-size="20.2" font-weight="normal" fill="#222222" stroke="#222222" stroke-width="0.2" textLength="44.70" lengthAdjust="spacing">culpa</text>
<text x="1109.53" y="568.4" font-family="Liberation Serif" font-size="20.2" font-weight="normal" fill="#222222" stroke="#222222" stroke-width="0.2" textLength="27.16" lengthAdjust="spacing">qui</text>
<text x="418.73" y="601" font-family="Liberation Serif" font-size="20.2" font-weight="normal" fill="#222222" stroke="#222222" stroke-width="0.2" textLength="51.57" lengthAdjust="spacing">officia</text>
<text x="480.60" y="601" font-family="Liberation Serif" font-size="20.2" font-weight="normal" fill="#222222" stroke="#222222" stroke-width="0.2" textLength="73.02" lengthAdjust="spacing">deserunt</text>
<text x="563.56" y="601" font-family="Liberation Serif" font-size="20.2" font-weight="normal" fill="#222222" stroke="#222222" stroke-width="0.2" textLength="48.48" lengthAdjust="spacing">mollit</text>
<text x="622.08" y="601" font-family="Liberation Serif" font-size="20.2" font-weight="normal" fill="#222222" stroke="#222222" stroke-width="0.2" textLength="42.58" lengthAdjust="spacing">anim</text>
<text x="674.40" y="601" font-family="Liberation Serif" font-size="20.2" font-weight="normal" fill="#222222" stroke="#222222" stroke-width="0.2" textLength="16.16" lengthAdjust="spacing">id</text>
<text x="700.40" y="601" font-family="Liberation Serif" font-size="20.2" font-weight="normal" fill="#222222" stroke="#222222" stroke-width="0.2" textLength="22.77" lengthAdjust="spacing">est</text>
<text x="732.86" y="601" font-family="Liberation Serif" font-size="20.2" font-weight="normal" fill="#222222" stroke="#222222" stroke-width="0.2" textLength="76.17" lengthAdjust="spacing">laborum.</text>
<path d="M284.5,414.2 H382.4 V402.4 L403.5,426.6 L382.4,451.2 V439.4 H284.5 Z" fill="#5b9bd5" stroke="#41719c" stroke-width="1"/>
<path d="M285.6,402.4 H408 V451.2 H285.6 Z" stroke="#8c8c8c" stroke-width="1" fill="none" />
<path d="M345.8,380.5 V397.4" stroke="#8c8c8c" stroke-width="1.2" fill="none" />
<circle cx="345.8" cy="372.4" r="7.2" fill="none" stroke="#8c8c8c" stroke-width="1.3" stroke-dasharray="38 7" stroke-dashoffset="-30"/>
<circle cx="345.8" cy="372.4" r="1.6" fill="none" stroke="#8c8c8c" stroke-width="1"/>
<path d="M336.5,372 L340.5,370.5 L339.5,375.5 Z" stroke="none" stroke-width="1" fill="#8c8c8c" />
<rect x="281.0" y="397.79999999999995" width="9.2" height="9.2" fill="#ffffff" stroke="#8c8c8c" stroke-width="1.2"/>
<rect x="281.0" y="421.79999999999995" width="9.2" height="9.2" fill="#ffffff" stroke="#8c8c8c" stroke-width="1.2"/>
<rect x="281.0" y="446.59999999999997" width="9.2" height="9.2" fill="#ffffff" stroke="#8c8c8c" stroke-width="1.2"/>
<rect x="341.9" y="397.79999999999995" width="9.2" height="9.2" fill="#ffffff" stroke="#8c8c8c" stroke-width="1.2"/>
<rect x="341.9" y="446.59999999999997" width="9.2" height="9.2" fill="#ffffff" stroke="#8c8c8c" stroke-width="1.2"/>
<rect x="403.4" y="397.79999999999995" width="9.2" height="9.2" fill="#ffffff" stroke="#8c8c8c" stroke-width="1.2"/>
<rect x="403.4" y="421.79999999999995" width="9.2" height="9.2" fill="#ffffff" stroke="#8c8c8c" stroke-width="1.2"/>
<rect x="403.4" y="446.59999999999997" width="9.2" height="9.2" fill="#ffffff" stroke="#8c8c8c" stroke-width="1.2"/>
<path d="M284.7,407.4 L290.7,413.4 L284.7,419.4 L278.7,413.4 Z" fill="#f5e536" stroke="#4a6fa5" stroke-width="1"/>
<path d="M382.4,395.7 L388.4,401.7 L382.4,407.7 L376.4,401.7 Z" fill="#f5e536" stroke="#4a6fa5" stroke-width="1"/>
</svg>
</body></html>
